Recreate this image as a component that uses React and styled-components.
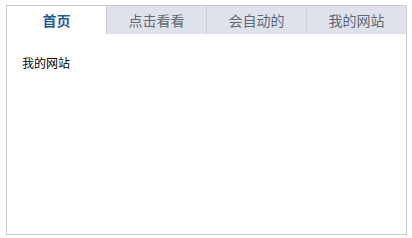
import React, { useState } from "react";
import styled, { createGlobalStyle } from "styled-components";

const Global = createGlobalStyle`
  html, body { margin: 0; padding: 0; background: #fff; }
  body { font-family: "Noto Sans CJK SC", "Microsoft YaHei", sans-serif; }
`;

const Box = styled.div`
  box-sizing: border-box;
  margin: 5px 0 0 6px;
  width: 401px;
  height: 230px;
  border: 1px solid #cccccc;
  display: flex;
  flex-direction: column;
`;

const TabBar = styled.div`
  display: flex;
  height: 28px;
  background: #dfe2ea;
`;

const Tab = styled.div`
  flex: 1;
  display: flex;
  align-items: center;
  justify-content: center;
  font-size: 14px;
  color: ${(p) => (p.$active ? "#1f5a99" : "#626873")};
  font-weight: ${(p) => (p.$active ? "bold" : "normal")};
  background: ${(p) => (p.$active ? "#ffffff" : "#dfe2ea")};
  border-left: ${(p) => (p.$first ? "none" : "1px solid #cbcfda")};
  cursor: pointer;
`;

const Content = styled.div`
  flex: 1;
  padding: 20px 15px;
  font-size: 12px;
  line-height: 18px;
  color: #000;
`;

const tabs = ["首页", "点击看看", "会自动的", "我的网站"];

export default function App() {
  const [active, setActive] = useState(0);
  return (
    <>
      <Global />
      <Box>
        <TabBar>
          {tabs.map((t, i) => (
            <Tab key={t} $active={i === active} $first={i === 0} onClick={() => setActive(i)}>
              {t}
            </Tab>
          ))}
        </TabBar>
        <Content>我的网站</Content>
      </Box>
    </>
  );
}
